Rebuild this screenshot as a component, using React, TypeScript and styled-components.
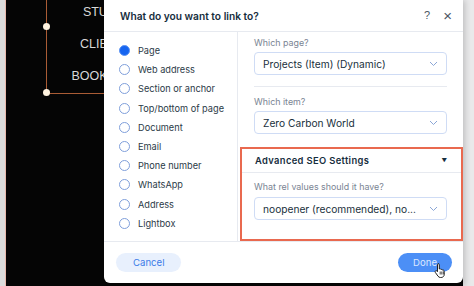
import React from "react";
import styled, { createGlobalStyle } from "styled-components";

const GlobalStyle = createGlobalStyle`
  html, body {
    margin: 0;
    padding: 0;
    width: 474px;
    height: 286px;
    overflow: hidden;
    background: #e9e9ea;
  }
  * { box-sizing: border-box; }
`;

const linkTypes = [
  "Page",
  "Web address",
  "Section or anchor",
  "Top/bottom of page",
  "Document",
  "Email",
  "Phone number",
  "WhatsApp",
  "Address",
  "Lightbox",
];

const menuItems = ["STUDIO", "CLIENTS", "BOOK NOW"];

function Chevron() {
  return (
    <svg width="9" height="6" viewBox="0 0 9 6">
      <path d="M1 1l3.5 3.5L8 1" fill="none" stroke="#8ba6d6" strokeWidth="1" />
    </svg>
  );
}

function Pointer() {
  return (
    <svg width="14" height="16" viewBox="0 0 14 16">
      <path
        d="M4 1.5c.8 0 1.3.6 1.3 1.3V7l.3-.1c.7-.2 1.3.1 1.5.6.6-.3 1.3 0 1.5.6.6-.3 1.4.1 1.5.8l.2 3.4c0 1.8-1.4 3.2-3.2 3.2H6.4c-1 0-1.8-.5-2.4-1.3L1.3 10.4c-.4-.6-.2-1.3.4-1.6.5-.3 1.1-.1 1.4.3l.4.6V2.8c0-.7.2-1.3.5-1.3z"
        fill="#fff"
        stroke="#222"
        strokeWidth="1"
        strokeLinejoin="round"
      />
      <path d="M6.2 9.5v3M7.8 9.5v3M9.3 9.5v3" stroke="#222" strokeWidth=".8" />
    </svg>
  );
}

export default function App() {
  return (
    <>
      <GlobalStyle />
      <Stage>
        <Canvas>
          <Editor>
            <MenuFrame>
              <Handle $top />
              {menuItems.map((m) => (
                <MenuItem key={m}>{m}</MenuItem>
              ))}
              <Handle />
            </MenuFrame>
          </Editor>
          <Dialog>
            <Header>
              <Title>What do you want to link to?</Title>
              <HeaderIcons>
                <IconButton>?</IconButton>
                <IconButton $close>×</IconButton>
              </HeaderIcons>
            </Header>
            <Body>
              <TypeList>
                {linkTypes.map((t, i) => (
                  <RadioRow key={t}>
                    <Radio $checked={i === 0} />
                    <RadioLabel>{t}</RadioLabel>
                  </RadioRow>
                ))}
              </TypeList>
              <Settings>
                <Field>
                  <FieldLabel>Which page?</FieldLabel>
                  <Select>
                    <span>Projects (Item) (Dynamic)</span>
                    <Chevron />
                  </Select>
                </Field>
                <Divider />
                <Field>
                  <FieldLabel>Which item?</FieldLabel>
                  <Select>
                    <span>Zero Carbon World</span>
                    <Chevron />
                  </Select>
                </Field>
                <Highlight>
                  <SectionHead>
                    <SectionTitle>Advanced SEO Settings</SectionTitle>
                    <Caret>▼</Caret>
                  </SectionHead>
                  <SectionBody>
                    <FieldLabel>What rel values should it have?</FieldLabel>
                    <Select>
                      <span>noopener (recommended), no...</span>
                      <Chevron />
                    </Select>
                  </SectionBody>
                </Highlight>
              </Settings>
            </Body>
            <Footer>
              <Button>Cancel</Button>
              <DoneWrap>
                <Button $primary>Done</Button>
                <Cursor>
                  <Pointer />
                </Cursor>
              </DoneWrap>
            </Footer>
          </Dialog>
        </Canvas>
      </Stage>
    </>
  );
}

const Stage = styled.div`
  display: flex;
  width: 474px;
  height: 286px;
  background: #e9e9ea;
`;

const Canvas = styled.div`
  display: flex;
  width: 463px;
  height: 286px;
  background: #050505;
  border-left: 5px solid #dcdcdc;
  box-shadow: inset 1px 0 0 #e9b9ad, 2px 0 6px rgba(0, 0, 0, 0.18);
`;

const Editor = styled.div`
  width: 99px;
  flex-shrink: 0;
  overflow: hidden;
  position: relative;
  z-index: 0;
`;

const MenuFrame = styled.div`
  display: flex;
  flex-direction: column;
  align-items: center;
  margin-left: 41px;
  width: 120px;
  height: 94px;
  border-left: 1px solid #a95c35;
  border-bottom: 1px solid #a95c35;
  padding-top: 3px;
  gap: 14px;
  position: relative;
`;

const Handle = styled.span<{ $top?: boolean }>`
  position: absolute;
  left: -4px;
  top: ${(p) => (p.$top ? "23px" : "89px")};
  width: 7px;
  height: 7px;
  border-radius: 50%;
  background: #fff3e0;
`;

const MenuItem = styled.div`
  font-family: "Liberation Sans", Arial, sans-serif;
  font-size: 12.5px;
  line-height: 18px;
  color: #d8d8d8;
  white-space: nowrap;
`;

const Dialog = styled.div`
  flex: 1;
  display: flex;
  flex-direction: column;
  height: 283px;
  background: #fff;
  border-radius: 0 0 6px 6px;
  font-family: Inter, "Liberation Sans", sans-serif;
  color: #20303c;
  position: relative;
  z-index: 1;
`;

const Header = styled.div`
  height: 32px;
  flex-shrink: 0;
  display: flex;
  align-items: center;
  justify-content: space-between;
  padding: 0 11px 0 16px;
  border-bottom: 1px solid #e7eaf0;
`;

const Title = styled.div`
  font-size: 10.2px;
  font-weight: 600;
  color: #162d3d;
`;

const HeaderIcons = styled.div`
  display: flex;
  gap: 13px;
  align-items: center;
`;

const IconButton = styled.span<{ $close?: boolean }>`
  font-family: "Liberation Sans", Arial, sans-serif;
  font-size: ${(p) => (p.$close ? "15px" : "11px")};
  color: #4a5663;
  line-height: 1;
`;

const Body = styled.div`
  flex: 1;
  display: flex;
  min-height: 0;
`;

const TypeList = styled.div`
  width: 134px;
  flex-shrink: 0;
  border-right: 1px solid #e7eaf0;
  padding: 9px 0 0 15px;
`;

const RadioRow = styled.div`
  display: flex;
  align-items: center;
  gap: 8px;
  height: 19.2px;
`;

const Radio = styled.span<{ $checked?: boolean }>`
  width: 11px;
  height: 11px;
  border-radius: 50%;
  flex-shrink: 0;
  border: 1px solid ${(p) => (p.$checked ? "#5d94f4" : "#7f9fdb")};
  background: ${(p) => (p.$checked ? "#1665f0" : "#fff")};
`;

const RadioLabel = styled.span`
  font-size: 9.2px;
  color: #2b3a47;
  white-space: nowrap;
`;

const Settings = styled.div`
  flex: 1;
  display: flex;
  flex-direction: column;
  padding-top: 4px;
`;

const Field = styled.div`
  display: flex;
  flex-direction: column;
  gap: 2px;
  padding: 0 16px;
`;

const FieldLabel = styled.div`
  font-size: 8.9px;
  line-height: 14px;
  color: #7a8493;
  white-space: nowrap;
`;

const Select = styled.div`
  height: 23px;
  display: flex;
  align-items: center;
  justify-content: space-between;
  padding: 0 8px 0 8px;
  border: 1px solid #cfdcf5;
  border-radius: 4px;
  font-size: 10.2px;
  color: #20303c;
  white-space: nowrap;
`;

const Divider = styled.div`
  height: 1px;
  background: #e7eaf0;
  margin: 11px 16px 8px;
`;

const Highlight = styled.div`
  margin: 13px 0 0 2px;
  border: 2px solid #e9694f;
  flex: 1;
  display: flex;
  flex-direction: column;
`;

const SectionHead = styled.div`
  height: 24px;
  display: flex;
  align-items: center;
  justify-content: space-between;
  padding: 0 14px 0 13px;
  border-bottom: 1px solid #e7eaf0;
`;

const SectionTitle = styled.div`
  font-size: 9.4px;
  font-weight: 600;
  color: #162d3d;
  letter-spacing: 0.35px;
`;

const Caret = styled.span`
  font-size: 5.5px;
  color: #162d3d;
`;

const SectionBody = styled.div`
  display: flex;
  flex-direction: column;
  gap: 3px;
  padding: 7px 14px 0 12px;
`;

const Footer = styled.div`
  height: 42px;
  flex-shrink: 0;
  display: flex;
  align-items: center;
  justify-content: space-between;
  padding: 0 11px 0 12px;
  border-top: 1px solid #e7eaf0;
`;

const Button = styled.div<{ $primary?: boolean }>`
  height: 19px;
  padding: 0 ${(p) => (p.$primary ? "15px" : "17px")};
  display: flex;
  align-items: center;
  border-radius: 10px;
  font-size: 9.6px;
  background: ${(p) => (p.$primary ? "#4c8ff6" : "#e8f0fd")};
  color: ${(p) => (p.$primary ? "#dce9ff" : "#3b7be8")};
`;

const DoneWrap = styled.div`
  position: relative;
`;

const Cursor = styled.span`
  position: absolute;
  left: 36px;
  top: 9px;
`;
